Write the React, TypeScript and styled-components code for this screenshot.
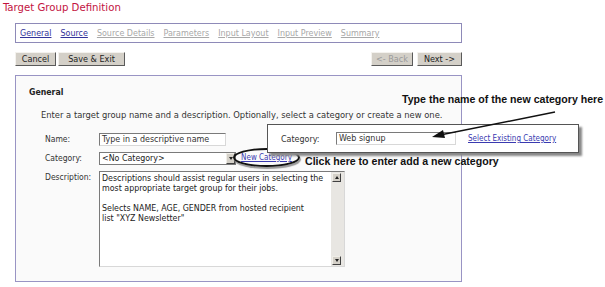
import React from "react"
import styled, { createGlobalStyle } from "styled-components"

const GlobalStyle = createGlobalStyle`
  body {
    margin: 0;
    background: #ffffff;
    font-family: "DejaVu Sans Condensed", "DejaVu Sans", sans-serif;
    color: #333333;
  }
`

const Page = styled.div`
  position: relative;
  width: 605px;
  height: 287px;
  overflow: hidden;
`

const Title = styled.div`
  margin-left: 3px;
  height: 18px;
  line-height: 15px;
  font-size: 11.3px;
  color: #c3143f;
`

const Content = styled.div`
  margin-left: 15px;
  width: 447px;
  display: flex;
  flex-direction: column;
`

const TabBar = styled.div`
  margin-top: 5px;
  height: 18px;
  border: 1px solid #8e8ab8;
  display: flex;
  align-items: center;
  gap: 9px;
  padding-left: 4px;
  font-size: 8.9px;
`

const Tab = styled.span<{ $state: "active" | "done" | "off" }>`
  text-decoration: underline;
  color: ${(p) => (p.$state === "off" ? "#a8a8a8" : "#33339a")};
`

const ButtonRow = styled.div`
  margin-top: 9px;
  height: 14px;
  display: flex;
  justify-content: space-between;
`

const ButtonGroup = styled.div<{ $gap: number }>`
  display: flex;
  gap: ${(p) => p.$gap}px;
`

const Button = styled.div<{ $w: number; $disabled?: boolean }>`
  width: ${(p) => p.$w}px;
  height: 14px;
  box-sizing: border-box;
  background: #d4d0c8;
  border: 1px solid;
  border-color: #f4f2ee #5a5a5a #5a5a5a #f4f2ee;
  display: flex;
  align-items: center;
  justify-content: center;
  font-size: 9px;
  color: ${(p) => (p.$disabled ? "#9a9a9a" : "#222")};
`

const Panel = styled.div`
  margin-top: 9px;
  height: 207px;
  box-sizing: border-box;
  border: 1px solid #9994c4;
  background: #fafafa;
  padding: 11px 0 0 13px;
  font-size: 8.8px;
`

const SectionTitle = styled.div`
  font-weight: bold;
  font-size: 8.7px;
  color: #222;
  height: 12px;
`

const Intro = styled.div`
  margin: 10px 0 0 12px;
  height: 12px;
  font-size: 9.3px;
  color: #333;
  white-space: nowrap;
`

const Form = styled.div`
  margin: 12px 0 0 16px;
  display: grid;
  grid-template-columns: 54px auto;
  row-gap: 6px;
  align-items: start;
`

const Label = styled.div`
  height: 13px;
  line-height: 13px;
  font-size: 8.5px;
  color: #333;
`

const TextInput = styled.div<{ $w: number }>`
  width: ${(p) => p.$w}px;
  height: 13px;
  box-sizing: border-box;
  border: 1px solid #7a7a7a;
  border-right-color: #d8d8d8;
  border-bottom-color: #d8d8d8;
  background: #fff;
  line-height: 11px;
  padding-left: 2px;
  font-size: 8.9px;
  color: #333;
`

const Select = styled.div`
  width: 137px;
  height: 13px;
  box-sizing: border-box;
  border: 1px solid #7a7a7a;
  background: #fff;
  display: flex;
  align-items: stretch;
`

const SelectText = styled.div`
  flex: 1;
  line-height: 11px;
  padding-left: 2px;
  color: #222;
`

const ArrowBox = styled.div<{ $h?: number }>`
  width: 9px;
  height: ${(p) => p.$h ?? 11}px;
  box-sizing: border-box;
  background: #d4d0c8;
  border: 1px solid;
  border-color: #f0eee8 #404040 #404040 #f0eee8;
  display: flex;
  align-items: center;
  justify-content: center;
`

const Caret = styled.div<{ $up?: boolean }>`
  width: 0;
  height: 0;
  border-left: 2.5px solid transparent;
  border-right: 2.5px solid transparent;
  ${(p) =>
    p.$up
      ? "border-bottom: 3px solid #222;"
      : "border-top: 3px solid #222;"}
`

const TextArea = styled.div`
  width: 246px;
  height: 96px;
  box-sizing: border-box;
  border: 1px solid #7a7a7a;
  border-right-color: #d8d8d8;
  border-bottom-color: #d8d8d8;
  background: #fff;
  display: flex;
`

const TextBody = styled.div`
  flex: 1;
  padding: 1px 2px;
  line-height: 10px;
  color: #222;
  white-space: pre;
`

const ScrollTrack = styled.div`
  width: 11px;
  background: #e8e6e2;
  display: flex;
  flex-direction: column;
  justify-content: space-between;
  padding: 1px 1px;
`

const Popup = styled.div`
  position: absolute;
  left: 267px;
  top: 124px;
  width: 312px;
  height: 29px;
  box-sizing: border-box;
  border: 1px solid #555;
  background: #fff;
  box-shadow: 3px 3px 2px #888;
  display: flex;
  align-items: center;
  padding-left: 13px;
  font-size: 8.9px;
`

const PopupLabel = styled.div`
  width: 55px;
  color: #333;
`

const Link = styled.span`
  color: #3a3ab0;
  text-decoration: underline;
  font-size: 8px;
`

const Oval = styled.div`
  position: absolute;
  left: 233px;
  top: 148px;
  width: 67px;
  height: 19px;
  box-sizing: border-box;
  border: 2px solid #111;
  border-radius: 50%;
  box-shadow: 1px 2px 1px #999;
  display: flex;
  align-items: center;
  justify-content: center;
`

const Note = styled.div<{ $x: number; $y: number }>`
  position: absolute;
  left: ${(p) => p.$x}px;
  top: ${(p) => p.$y}px;
  font-family: "Liberation Sans", Arial, sans-serif;
  font-weight: bold;
  font-size: 10.6px;
  color: #111;
  white-space: nowrap;
`

const Pointer = styled.svg`
  position: absolute;
  left: 0;
  top: 0;
`

export default function App() {
  return (
    <Page>
      <GlobalStyle />
      <Title>Target Group Definition</Title>
      <Content>
        <TabBar>
          <Tab $state="active">General</Tab>
          <Tab $state="done">Source</Tab>
          <Tab $state="off">Source Details</Tab>
          <Tab $state="off">Parameters</Tab>
          <Tab $state="off">Input Layout</Tab>
          <Tab $state="off">Input Preview</Tab>
          <Tab $state="off">Summary</Tab>
        </TabBar>
        <ButtonRow>
          <ButtonGroup $gap={2}>
            <Button $w={41}>Cancel</Button>
            <Button $w={67}>Save &amp; Exit</Button>
          </ButtonGroup>
          <ButtonGroup $gap={4}>
            <Button $w={42} $disabled>
              &lt;- Back
            </Button>
            <Button $w={45}>Next -&gt;</Button>
          </ButtonGroup>
        </ButtonRow>
        <Panel>
          <SectionTitle>General</SectionTitle>
          <Intro>
            Enter a target group name and a description. Optionally, select a
            category or create a new one.
          </Intro>
          <Form>
            <Label>Name:</Label>
            <TextInput $w={127}>Type in a descriptive name</TextInput>
            <Label>Category:</Label>
            <Select>
              <SelectText>&lt;No Category&gt;</SelectText>
              <ArrowBox>
                <Caret />
              </ArrowBox>
            </Select>
            <Label>Description:</Label>
            <TextArea>
              <TextBody>
                {
                  "Descriptions should assist regular users in selecting the\nmost appropriate target group for their jobs.\n\nSelects NAME, AGE, GENDER from hosted recipient\nlist \"XYZ Newsletter\""
                }
              </TextBody>
              <ScrollTrack>
                <ArrowBox $h={9}>
                  <Caret $up />
                </ArrowBox>
                <ArrowBox $h={9}>
                  <Caret />
                </ArrowBox>
              </ScrollTrack>
            </TextArea>
          </Form>
        </Panel>
      </Content>

      <Oval>
        <Link>New Category</Link>
      </Oval>
      <Popup>
        <PopupLabel>Category:</PopupLabel>
        <TextInput $w={120}>Web signup</TextInput>
        <Link style={{ marginLeft: 12 }}>Select Existing Category</Link>
      </Popup>
      <Note $x={402} $y={93}>
        Type the name of the new category here
      </Note>
      <Note $x={305} $y={155}>
        Click here to enter add a new category
      </Note>
      <Pointer width="605" height="287">
        <line x1="555" y1="112" x2="440" y2="135" stroke="#111" strokeWidth="1.5" />
        <polygon points="432,137 443,130 445,138" fill="#111" />
      </Pointer>
    </Page>
  )
}
